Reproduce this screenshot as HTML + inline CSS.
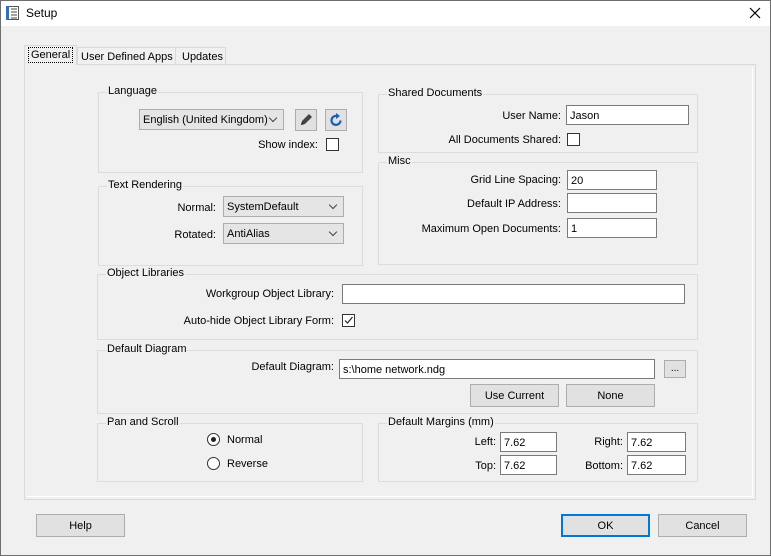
<!DOCTYPE html>
<html><head><style>
*{box-sizing:border-box;margin:0;padding:0}
body{width:771px;height:556px;overflow:hidden;background:#f0f0f0;font-family:"Liberation Sans",sans-serif;font-size:11px;color:#000;position:relative}
.a{position:absolute;white-space:nowrap}
.win{left:0;top:0;width:771px;height:556px;border:1px solid #6e6e6e}
.title{left:1px;top:1px;width:769px;height:25px;background:#fff}
.gb{position:absolute;border:1px solid #dcdcdc}
.lg{position:absolute;top:-8px;left:8px;background:#f0f0f0;padding:0 1px;white-space:nowrap}
.lbl{position:absolute;white-space:nowrap;text-align:right}
.tb{position:absolute;background:#fff;border:1px solid #7a7a7a;padding:4px 0 0 3px;white-space:nowrap}
.cb{position:absolute;background:#e5e5e5;border:1px solid #adadad;padding:4px 0 0 3px}
.cb:after{content:"";position:absolute;right:7px;top:5px;width:5px;height:5px;border-right:1px solid #444;border-bottom:1px solid #444;transform:rotate(45deg)}
.btn{position:absolute;background:#e1e1e1;border:1px solid #adadad;text-align:center;line-height:21px;padding-top:1px}
.chk{position:absolute;width:13px;height:13px;background:#fff;border:1px solid #333}
.rad{position:absolute;width:13px;height:13px;background:#fff;border:1px solid #333;border-radius:50%}
</style></head><body>
<div class="a win"></div>
<div class="a title"></div>
<svg class="a" style="left:4px;top:5px" width="16" height="16" viewBox="0 0 16 16"><rect x="2.5" y="1.5" width="12" height="13" fill="#fff" stroke="#555"/><rect x="2" y="1" width="3" height="14" fill="#3a6db5"/><path d="M7 4h6M7 7h6M7 10h6M7 13h6" stroke="#444"/></svg>
<div class="a" style="left:26px;top:6px;font-size:12px">Setup</div>
<svg class="a" style="left:749px;top:7px" width="12" height="12"><path d="M1 1L11 11M11 1L1 11" stroke="#000" stroke-width="1.2"/></svg>

<div class="a" style="left:24px;top:64px;width:732px;height:436px;border:1px solid #d9d9d9"></div>
<div class="a" style="left:27px;top:67px;width:726px;height:430px;border:1px solid #fff;border-top:none;border-left:none"></div>
<div class="a" style="left:24px;top:45px;width:53px;height:20px;background:#f0f0f0;border:1px solid #d9d9d9;border-bottom:none"></div>
<div class="a" style="left:28px;top:47px;width:45px;height:16px;border:1px dotted #000"></div>
<div class="a" style="left:31px;top:49px">General</div>
<div class="a" style="left:77px;top:47px;width:99px;height:18px;border:1px solid #d9d9d9;border-bottom:none"></div>
<div class="a" style="left:81px;top:51px">User Defined Apps</div>
<div class="a" style="left:176px;top:47px;width:50px;height:18px;border:1px solid #d9d9d9;border-bottom:none;border-left:none"></div>
<div class="a" style="left:182px;top:51px">Updates</div>

<div class="gb" style="left:98px;top:92px;width:265px;height:81px"><span class="lg">Language</span></div>
<div class="cb" style="left:139px;top:109px;width:145px;height:21px">English (United Kingdom)</div>
<div class="btn" style="left:295px;top:109px;width:22px;height:22px"></div>
<svg class="a" style="left:298px;top:112px" width="16" height="16"><path d="M3 13l1-4 7-7 3 3-7 7z" fill="#444"/><path d="M3 13l1-3 2 2z" fill="#222"/></svg>
<div class="btn" style="left:325px;top:109px;width:22px;height:22px"></div>
<svg class="a" style="left:328px;top:112px" width="16" height="16"><path d="M12.5 8.5A4.5 4.5 0 1 1 9 4" fill="none" stroke="#1a5fb4" stroke-width="2.2"/><path d="M8 1l4 3-4 3z" fill="#1a5fb4"/></svg>
<div class="lbl" style="right:453px;top:139px">Show index:</div>
<div class="chk" style="left:326px;top:138px"></div>

<div class="gb" style="left:98px;top:186px;width:265px;height:80px"><span class="lg">Text Rendering</span></div>
<div class="lbl" style="right:555px;top:202px">Normal:</div>
<div class="cb" style="left:223px;top:196px;width:121px;height:21px">SystemDefault</div>
<div class="lbl" style="right:555px;top:229px">Rotated:</div>
<div class="cb" style="left:223px;top:223px;width:121px;height:21px">AntiAlias</div>

<div class="gb" style="left:378px;top:94px;width:320px;height:59px"><span class="lg">Shared Documents</span></div>
<div class="lbl" style="right:210px;top:110px">User Name:</div>
<div class="tb" style="left:566px;top:105px;width:123px;height:20px">Jason</div>
<div class="lbl" style="right:210px;top:134px">All Documents Shared:</div>
<div class="chk" style="left:567px;top:133px"></div>

<div class="gb" style="left:378px;top:162px;width:320px;height:103px"><span class="lg">Misc</span></div>
<div class="lbl" style="right:210px;top:174px">Grid Line Spacing:</div>
<div class="tb" style="left:567px;top:170px;width:90px;height:20px">20</div>
<div class="lbl" style="right:210px;top:198px">Default IP Address:</div>
<div class="tb" style="left:567px;top:193px;width:90px;height:20px"></div>
<div class="lbl" style="right:210px;top:223px">Maximum Open Documents:</div>
<div class="tb" style="left:567px;top:218px;width:90px;height:20px">1</div>

<div class="gb" style="left:97px;top:274px;width:601px;height:66px"><span class="lg">Object Libraries</span></div>
<div class="lbl" style="right:437px;top:288px">Workgroup Object Library:</div>
<div class="tb" style="left:342px;top:284px;width:343px;height:20px"></div>
<div class="lbl" style="right:437px;top:315px">Auto-hide Object Library Form:</div>
<div class="chk" style="left:342px;top:314px"></div>
<svg class="a" style="left:343px;top:315px" width="11" height="11"><path d="M2 5.5l2.5 2.5 5-6" fill="none" stroke="#222" stroke-width="1.2"/></svg>

<div class="gb" style="left:97px;top:350px;width:601px;height:64px"><span class="lg">Default Diagram</span></div>
<div class="lbl" style="right:437px;top:361px">Default Diagram:</div>
<div class="tb" style="left:339px;top:359px;width:316px;height:20px">s:\home network.ndg</div>
<div class="btn" style="left:664px;top:360px;width:22px;height:18px;line-height:14px;font-size:10px">...</div>
<div class="btn" style="left:470px;top:384px;width:89px;height:23px">Use Current</div>
<div class="btn" style="left:566px;top:384px;width:89px;height:23px">None</div>

<div class="gb" style="left:97px;top:423px;width:266px;height:59px"><span class="lg">Pan and Scroll</span></div>
<div class="rad" style="left:207px;top:433px"></div>
<div class="a" style="left:211px;top:437px;width:5px;height:5px;border-radius:50%;background:#222"></div>
<div class="a" style="left:227px;top:434px">Normal</div>
<div class="rad" style="left:207px;top:457px"></div>
<div class="a" style="left:227px;top:458px">Reverse</div>

<div class="gb" style="left:378px;top:423px;width:320px;height:59px"><span class="lg">Default Margins (mm)</span></div>
<div class="lbl" style="right:275px;top:436px">Left:</div>
<div class="tb" style="left:500px;top:432px;width:57px;height:20px">7.62</div>
<div class="lbl" style="right:148px;top:436px">Right:</div>
<div class="tb" style="left:627px;top:432px;width:59px;height:20px">7.62</div>
<div class="lbl" style="right:275px;top:460px">Top:</div>
<div class="tb" style="left:500px;top:455px;width:57px;height:20px">7.62</div>
<div class="lbl" style="right:148px;top:460px">Bottom:</div>
<div class="tb" style="left:627px;top:455px;width:59px;height:20px">7.62</div>

<div class="btn" style="left:36px;top:514px;width:89px;height:23px">Help</div>
<div class="btn" style="left:561px;top:514px;width:89px;height:23px;border:2px solid #0078d7;line-height:18px">OK</div>
<div class="btn" style="left:658px;top:514px;width:89px;height:23px">Cancel</div>
</body></html>
